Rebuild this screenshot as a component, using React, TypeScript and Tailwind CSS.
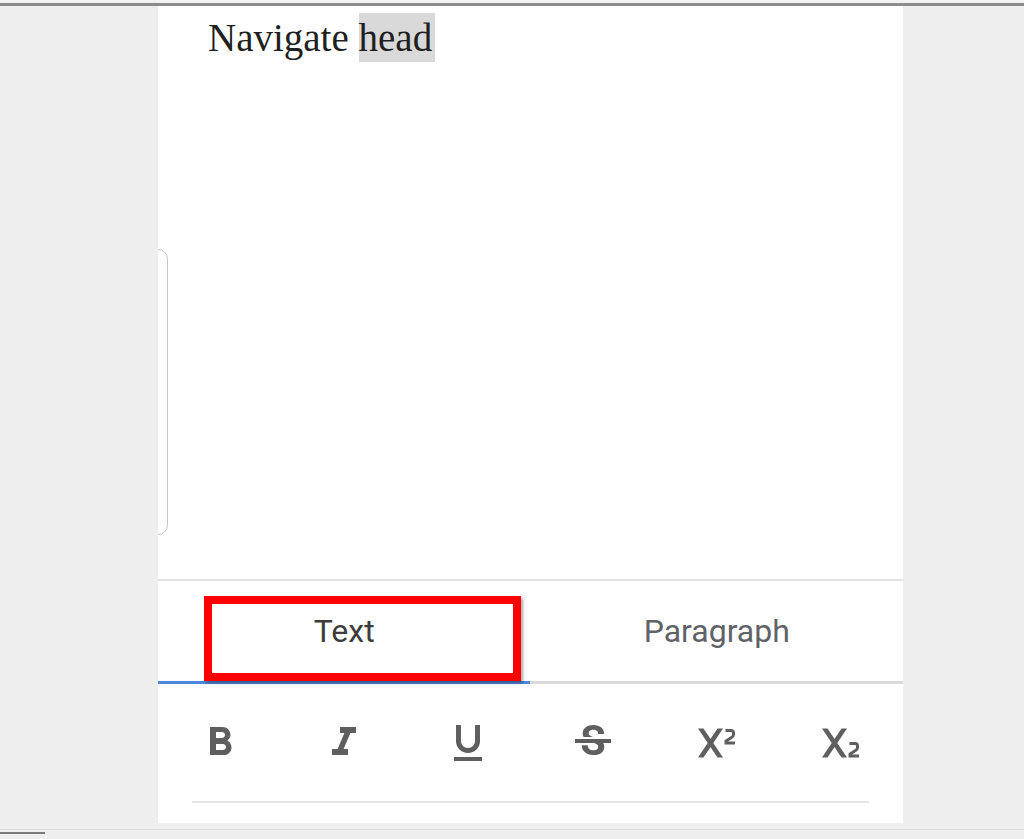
import React from 'react';

const iconClass = 'w-[48px] h-[48px] fill-[#5f5f5f]';

// Material-style format icons, 24 unit viewBox drawn at 48px
const BoldIcon = () => (
  <svg viewBox="0 0 24 24" className={iconClass}>
    <path d="M15.6 10.79c.97-.67 1.65-1.77 1.65-2.79 0-2.26-1.75-4-4-4H7v14h7.04c2.09 0 3.71-1.7 3.71-3.79 0-1.52-.86-2.820-2.15-3.42zM10 6.5h3c.83 0 1.5.67 1.5 1.5s-.67 1.5-1.5 1.5h-3v-3zm3.5 9H10v-3h3.5c.83 0 1.5.67 1.5 1.5s-.67 1.5-1.5 1.5z" />
  </svg>
);

const ItalicIcon = () => (
  <svg viewBox="0 0 24 24" className={iconClass}>
    <path d="M10 4v3h2.21l-3.42 8H6v3h8v-3h-2.21l3.42-8H18V4z" />
  </svg>
);

const UnderlineIcon = () => (
  <svg viewBox="0 0 24 24" className={iconClass}>
    <path d="M12 17c3.31 0 6-2.690 6-6V3h-2.5v8c0 1.93-1.57 3.5-3.5 3.5S8.5 12.93 8.5 11V3H6v8c0 3.31 2.69 6 6 6zm-7 2v2h14v-2H5z" />
  </svg>
);

const StrikeIcon = () => (
  <svg viewBox="0 0 24 24" className={iconClass}>
    <path d="M7.24 8.75c-.26-.48-.39-1.03-.39-1.67 0-.61.13-1.16.4-1.67.26-.5.63-.93 1.11-1.29.48-.35 1.05-.63 1.7-.83.66-.19 1.39-.29 2.18-.29.81 0 1.54.11 2.21.34.66.22 1.23.54 1.69.94.47.4.83.88 1.08 1.43.25.55.38 1.15.38 1.81h-3.01c0-.31-.05-.59-.15-.85-.09-.27-.24-.49-.44-.68-.2-.19-.45-.33-.75-.44-.3-.1-.66-.16-1.06-.16-.39 0-.74.04-1.03.13-.29.09-.53.21-.72.36-.19.16-.34.34-.44.55-.1.21-.15.43-.15.66 0 .48.25.88.74 1.21.38.25.77.48 1.41.7H7.39c-.05-.08-.11-.17-.15-.25zM21 12v-2H3v2h9.62c.18.07.4.14.55.2.37.17.66.34.87.51.21.17.35.36.43.57.07.2.11.43.11.69 0 .23-.05.45-.14.66-.09.2-.23.38-.42.53-.19.15-.42.26-.71.35-.29.08-.63.13-1.01.13-.43 0-.83-.04-1.18-.13s-.66-.23-.91-.42c-.25-.19-.45-.44-.59-.75-.14-.31-.25-.76-.25-1.21H6.4c0 .55.08 1.130.24 1.58.16.45.37.85.65 1.21.28.35.6.66.98.92.37.26.78.48 1.22.65.44.17.9.3 1.38.39.48.08.96.13 1.44.13.8 0 1.53-.09 2.18-.28s1.21-.45 1.67-.79c.46-.34.82-.77 1.07-1.27s.38-1.07.38-1.71c0-.6-.1-1.14-.31-1.61-.05-.11-.11-.23-.17-.33H21z" />
  </svg>
);

// X with a small squared "2", drawn in a 48px box
const ScriptIcon = ({ sub }: { sub?: boolean }) => {
  const dy = sub ? 13 : 0;
  return (
    <svg viewBox="0 0 48 48" className="w-[48px] h-[48px]">
      <polygon points="5,9.5 10.5,9.5 30,38.5 24.5,38.5" fill="#5f5f5f" />
      <polygon points="24.5,9.5 30,9.5 10.5,38.5 5,38.5" fill="#5f5f5f" />
      <path
        d={`M32.5 ${11.5 + dy} H38 Q40.5 ${11.5 + dy} 40.5 ${14 + dy} V${15.5 + dy} Q40.5 ${17.5 + dy} 38.5 ${18.5 + dy} L33 ${22 + dy} V${24 + dy} H42`}
        fill="none"
        stroke="#5f5f5f"
        strokeWidth="3"
      />
    </svg>
  );
};

const formatButtons = [
  { key: 'bold', icon: <BoldIcon /> },
  { key: 'italic', icon: <ItalicIcon /> },
  { key: 'underline', icon: <UnderlineIcon /> },
  { key: 'strike', icon: <StrikeIcon /> },
  { key: 'sup', icon: <ScriptIcon /> },
  { key: 'sub', icon: <ScriptIcon sub /> },
];

export default function App() {
  return (
    <div className="w-[1024px] h-[839px] flex flex-col bg-[#eeeeee] overflow-hidden">
      {/* Window top edge */}
      <div className="h-[3px] bg-[#f2f2f2]" />
      <div className="h-[3px] bg-[#8c8c8c]" />

      <div className="flex flex-1 min-h-0">
        <div className="w-[158px] bg-[#eeeeee]" />

        {/* Document panel */}
        <div className="relative w-[745px] flex flex-col bg-white overflow-hidden">
          {/* Side drawer handle, mostly off-panel */}
          <div className="absolute left-[-14px] top-[243px] w-[24px] h-[286px] rounded-[10px] border border-[#c6c6c6]" />

          <div className="flex-1 pl-[50px] pt-[7px]">
            <p className="text-[39px] leading-[49px] text-[#1f1f1f] font-['Liberation_Serif',serif]">
              Navigate <span className="bg-[#d9d9d9] py-[3px] pr-[3px]">head</span>
            </p>
          </div>

          {/* Tabs */}
          <div className="h-[2px] bg-[#e2e2e2]" />
          <div className="relative flex h-[100px] font-['Roboto',sans-serif]">
            <div className="flex-1 flex items-center justify-center text-[32px] text-[#3c3c3c]">
              Text
            </div>
            <div className="flex-1 flex items-center justify-center text-[32px] text-[#5f6368]">
              Paragraph
            </div>
            {/* Annotation box */}
            <div className="absolute left-[46px] top-[15px] w-[317px] h-[85px] border-[8px] border-[#ff0000] shadow-[2px_2px_3px_rgba(0,0,0,0.35)]" />
          </div>
          <div className="flex h-[3px]">
            <div className="w-[372px] bg-[#4f86d9]" />
            <div className="flex-1 bg-[#dadada]" />
          </div>

          {/* Format buttons */}
          <div className="grid grid-cols-6 h-[117px]">
            {formatButtons.map(({ key, icon }) => (
              <div key={key} className="flex items-center justify-center">
                {icon}
              </div>
            ))}
          </div>
          <div className="mx-[34px] h-[2px] bg-[#e6e6e6]" />
          <div className="h-[20px]" />
        </div>

        <div className="flex-1 bg-[#eeeeee]" />
      </div>

      {/* Window bottom edge */}
      <div className="h-[6px] bg-[#efefef]" />
      <div className="h-[1px] bg-[#dcdcdc]" />
      <div className="h-[9px] bg-[#eeeeee] pt-[2px]">
        <div className="w-[45px] h-[2px] bg-[#7a7a7a]" />
      </div>
    </div>
  );
}
